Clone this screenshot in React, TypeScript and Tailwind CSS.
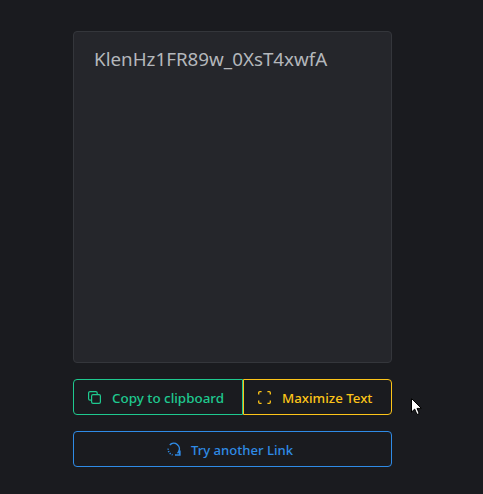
function CopyIcon() {
  return (
    <svg width={13} height={13} viewBox="0 0 13 13" fill="none" stroke="currentColor" strokeWidth={1.2} className="shrink-0">
      <rect x={3.6} y={3.6} width={8.8} height={8.8} rx={1.4} />
      <path d="M3.6 9.2H2A1.4 1.4 0 0 1 .6 7.8V2A1.4 1.4 0 0 1 2 .6h5.8a1.4 1.4 0 0 1 1.4 1.4v1.6" />
    </svg>
  );
}

function MaximizeIcon() {
  return (
    <svg width={13} height={13} viewBox="0 0 13 13" fill="none" stroke="currentColor" strokeWidth={1.3} className="shrink-0">
      <path d="M.7 3.6V1.7a1 1 0 0 1 1-1h1.9M9.4.7h1.9a1 1 0 0 1 1 1v1.9M12.3 9.4v1.9a1 1 0 0 1-1 1H9.4M3.6 12.3H1.7a1 1 0 0 1-1-1V9.4" />
    </svg>
  );
}

function RetryIcon() {
  return (
    <svg width={14} height={14} viewBox="0 0 14 14" fill="none" stroke="currentColor" strokeWidth={1.5} className="shrink-0">
      <path d="M2.8 3A5.6 5.6 0 0 1 11.6 9.8L10.6 11.4" />
      <path d="M1.2 6.6a5.8 5.8 0 0 0 4.4 6.2" strokeDasharray="1.2 1.2" />
      <path d="M8 13h4.8V8.4" strokeWidth={1.7} />
    </svg>
  );
}

function Cursor() {
  return (
    <svg width={13} height={19} viewBox="0 0 13 19" className="absolute left-[410px] top-[397px]">
      <path d="M1.5 1.5v13.6l3.2-3 2.3 5.4 2.2-1-2.2-5.1h4.4z" fill="#fff" stroke="#000" strokeWidth={1} />
    </svg>
  );
}

export default function App() {
  return (
    <div className="relative h-[494px] w-[483px] overflow-hidden bg-[#1a1b1f] pl-[73px] pt-[31px] font-['Noto_Sans','Open_Sans',sans-serif]">
      <div className="w-[319px]">
        <div className="h-[332px] rounded border border-[#34363b] bg-[#25262b] px-5 py-3 text-[18.8px] leading-[30px] text-[#b4b7bb]">
          KlenHz1FR89w_0XsT4xwfA
        </div>

        <div className="mt-4 flex h-9">
          <button className="flex w-[170px] items-center rounded-l border border-[#1fc98f] pl-[14px] text-[13.4px] font-medium text-[#1fc98f]">
            <CopyIcon />
            <span className="ml-[11px] pt-[3px]">Copy to clipboard</span>
          </button>
          <button className="flex flex-1 items-center rounded-r border border-[#fcc419] pl-[14px] text-[13.3px] font-medium text-[#fcc419]">
            <MaximizeIcon />
            <span className="ml-[11px] pt-[3px]">Maximize Text</span>
          </button>
        </div>

        <button className="mt-4 flex h-9 w-full items-center justify-center gap-[10px] rounded border border-[#2f8be6] pr-[5px] text-[13.1px] font-medium text-[#2f8be6]">
          <RetryIcon />
          <span className="pt-[3px]">Try another Link</span>
        </button>
      </div>
      <Cursor />
    </div>
  );
}
